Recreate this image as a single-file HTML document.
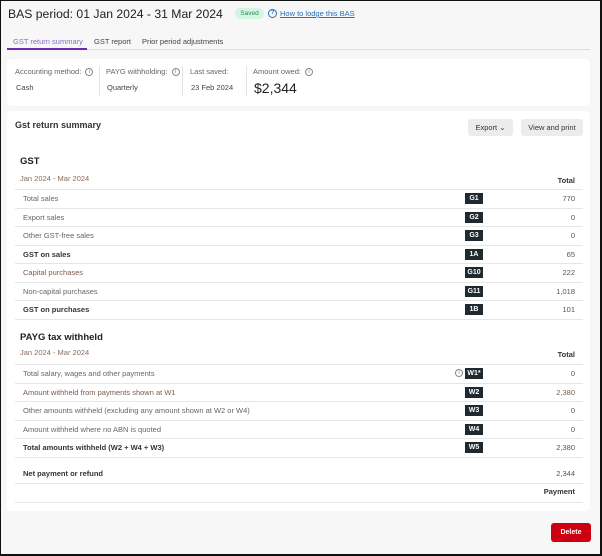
<!DOCTYPE html>
<html><head><meta charset="utf-8"><style>
*{margin:0;padding:0;box-sizing:border-box}
body{width:602px;height:556px;background:#f7f7f7;font-family:"Liberation Sans",sans-serif;position:relative;overflow:hidden;color:#333}
.frame{position:absolute;left:0;top:0;width:602px;height:556px;border:1px solid #111;border-width:1px 2px 2px 1px;pointer-events:none}
.a{position:absolute;white-space:nowrap;line-height:10px;font-size:7.5px}
.card{position:absolute;background:#fff;border-radius:4px}
.hl{position:absolute;left:15px;width:568px;height:1px;background:#e6e6e6}
.bd{position:absolute;left:465px;width:18px;height:11px;background:#1e2a30;color:#fff;font-size:7px;font-weight:bold;text-align:center;line-height:11px}
.r{right:27px;text-align:right;color:#555}
.lb{color:#666}
.i{display:inline-block;width:8px;height:8px;border:1px solid #888;border-radius:50%;font-size:6px;line-height:6px;text-align:center;color:#777;vertical-align:middle;margin-left:2px}
.vd{position:absolute;top:66px;width:1px;height:30px;background:#e3e3e3}
.btn{position:absolute;background:#ececec;border-radius:3px;font-size:7.5px;text-align:center;line-height:17px;color:#333}
</style></head><body>
<div class="a" style="left:8px;top:6px;font-size:12.2px;line-height:16px;color:#222">BAS period: 01 Jan 2024 - 31 Mar 2024</div>
<div class="a" style="left:235px;top:8px;width:29px;height:11px;line-height:11px;background:#d3f5e3;color:#2f8a56;border-radius:6px;font-size:6.5px;text-align:center">Saved</div>
<div class="a" style="left:268px;top:9px;width:9px;height:9px;border:1.3px solid #2a6fb6;border-radius:50%;font-size:6px;line-height:6px;text-align:center;color:#2a6fb6;font-weight:bold">?</div>
<div class="a" style="left:280px;top:9px;font-size:7.5px;color:#2a6fb6;text-decoration:underline">How to lodge this BAS</div>

<div class="a" style="left:13px;top:37px;color:#8a6cc8">GST return summary</div>
<div class="a" style="left:94px;top:37px;color:#444">GST report</div>
<div class="a" style="left:142px;top:37px;color:#444">Prior period adjustments</div>
<div style="position:absolute;left:7px;top:49px;width:583px;height:1px;background:#ddd"></div>
<div style="position:absolute;left:7px;top:48px;width:80px;height:2px;background:#6a2bb0"></div>

<div class="card" style="left:7px;top:59px;width:583px;height:47px"></div>
<div class="a lb" style="left:15px;top:67px">Accounting method: <span class="i">i</span></div>
<div class="a" style="left:16px;top:83px;color:#444">Cash</div>
<div class="vd" style="left:99px"></div>
<div class="a lb" style="left:106px;top:67px">PAYG withholding: <span class="i">i</span></div>
<div class="a" style="left:107px;top:83px;color:#444">Quarterly</div>
<div class="vd" style="left:182px"></div>
<div class="a lb" style="left:190px;top:67px">Last saved:</div>
<div class="a" style="left:191px;top:83px;color:#444">23 Feb 2024</div>
<div class="vd" style="left:246px"></div>
<div class="a lb" style="left:253px;top:67px">Amount owed: <span class="i">i</span></div>
<div class="a" style="left:254px;top:80px;font-size:14px;line-height:16px;color:#222">$2,344</div>

<div class="card" style="left:7px;top:111px;width:583px;height:400px"></div>
<div class="a" style="left:15px;top:120px;font-size:9px;font-weight:bold;color:#333">Gst return summary</div>
<div class="btn" style="left:468px;top:119px;width:45px">Export ⌄</div>
<div class="btn" style="left:521px;top:119px;width:62px">View and print</div>

<div class="a" style="left:20px;top:157px;font-size:9.5px;font-weight:bold;color:#222">GST</div>
<div class="a" style="left:20px;top:174px;color:#8a6a5a">Jan 2024 - Mar 2024</div>
<div class="a r" style="top:176px;font-weight:bold;color:#333">Total</div>
<div class="hl" style="top:189px"></div>
<div class="a lb" style="left:23px;top:194px">Total sales</div><div class="bd" style="top:193px">G1</div><div class="a r" style="top:194px">770</div>
<div class="hl" style="top:208px"></div>
<div class="a lb" style="left:23px;top:213px">Export sales</div><div class="bd" style="top:212px">G2</div><div class="a r" style="top:213px">0</div>
<div class="hl" style="top:226px"></div>
<div class="a lb" style="left:23px;top:231px">Other GST-free sales</div><div class="bd" style="top:230px">G3</div><div class="a r" style="top:231px">0</div>
<div class="hl" style="top:245px"></div>
<div class="a" style="left:23px;top:250px;font-weight:bold">GST on sales</div><div class="bd" style="top:249px">1A</div><div class="a r" style="top:250px">65</div>
<div class="hl" style="top:263px"></div>
<div class="a lb" style="left:23px;top:268px;color:#7a5a4a">Capital purchases</div><div class="bd" style="top:267px">G10</div><div class="a r" style="top:268px">222</div>
<div class="hl" style="top:282px"></div>
<div class="a lb" style="left:23px;top:287px">Non-capital purchases</div><div class="bd" style="top:286px">G11</div><div class="a r" style="top:287px">1,018</div>
<div class="hl" style="top:300px"></div>
<div class="a" style="left:23px;top:305px;font-weight:bold">GST on purchases</div><div class="bd" style="top:304px">1B</div><div class="a r" style="top:305px">101</div>
<div class="hl" style="top:319px"></div>

<div class="a" style="left:20px;top:333px;font-size:9.5px;font-weight:bold;color:#222">PAYG tax withheld</div>
<div class="a" style="left:20px;top:348px;color:#8a6a5a">Jan 2024 - Mar 2024</div>
<div class="a r" style="top:350px;font-weight:bold;color:#333">Total</div>
<div class="hl" style="top:364px"></div>
<div class="a lb" style="left:23px;top:369px">Total salary, wages and other payments</div><span class="a i" style="left:455px;top:369px;margin:0;line-height:6px">i</span><div class="bd" style="top:368px">W1*</div><div class="a r" style="top:369px">0</div>
<div class="hl" style="top:383px"></div>
<div class="a lb" style="left:23px;top:388px;color:#7a5a4a">Amount withheld from payments shown at W1</div><div class="bd" style="top:387px">W2</div><div class="a r" style="top:388px;color:#7a5a4a">2,380</div>
<div class="hl" style="top:401px"></div>
<div class="a lb" style="left:23px;top:406px">Other amounts withheld (excluding any amount shown at W2 or W4)</div><div class="bd" style="top:405px">W3</div><div class="a r" style="top:406px">0</div>
<div class="hl" style="top:420px"></div>
<div class="a lb" style="left:23px;top:425px">Amount withheld where no ABN is quoted</div><div class="bd" style="top:424px">W4</div><div class="a r" style="top:425px">0</div>
<div class="hl" style="top:438px"></div>
<div class="a" style="left:23px;top:443px;font-weight:bold">Total amounts withheld (W2 + W4 + W3)</div><div class="bd" style="top:442px">W5</div><div class="a r" style="top:443px">2,380</div>
<div class="hl" style="top:457px"></div>
<div class="a" style="left:23px;top:469px;font-weight:bold">Net payment or refund</div><div class="a r" style="top:469px">2,344</div>
<div class="hl" style="top:483px"></div>
<div class="a r" style="top:487px;font-weight:bold;color:#333">Payment</div>
<div class="hl" style="top:502px"></div>

<div class="a" style="left:551px;top:523px;width:40px;height:19px;line-height:19px;background:#cc0010;color:#fff;border-radius:3px;text-align:center;font-weight:bold;font-size:7px">Delete</div>
<div class="frame"></div>
</body></html>
